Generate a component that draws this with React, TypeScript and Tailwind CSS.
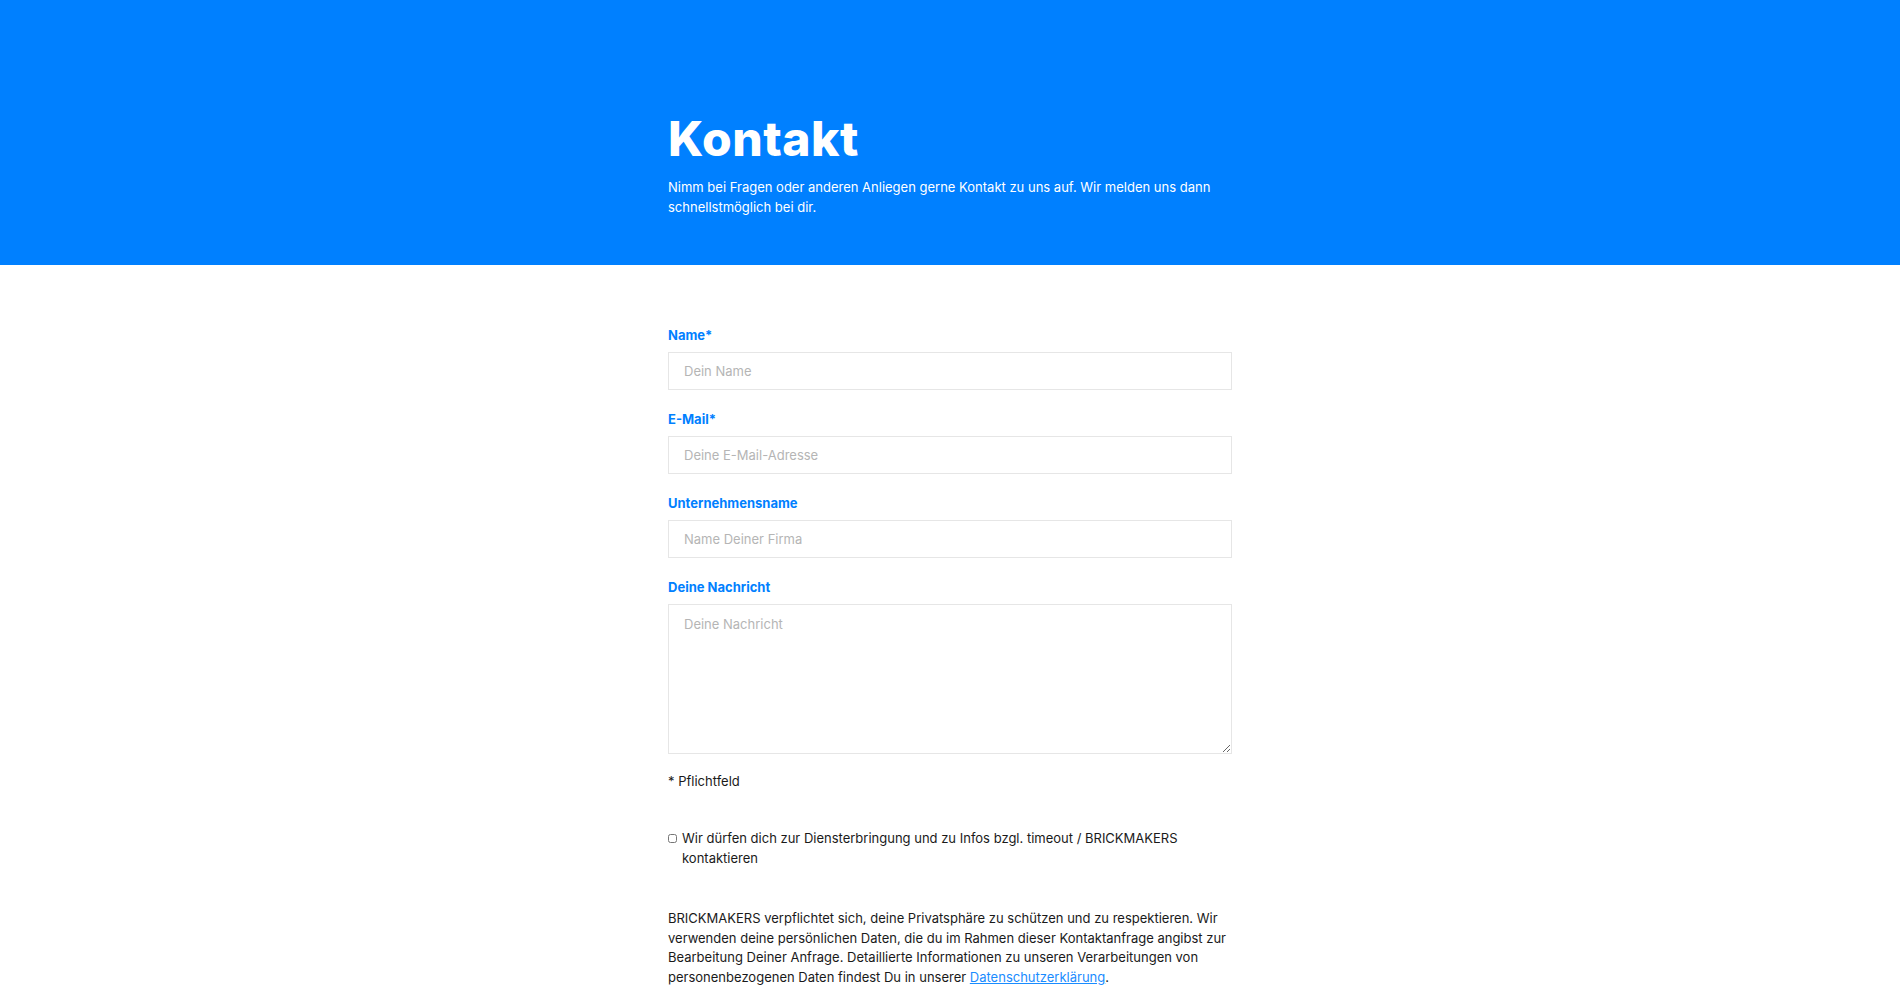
import { useState } from 'react'

// ── Form field ────────────────────────────────────────────────────────────────

interface FieldProps {
  label: string
  placeholder: string
  type?: string
  multiline?: boolean
}

function Field({ label, placeholder, type = 'text', multiline = false }: FieldProps) {
  return (
    <div className="flex flex-col">
      <label className="mb-2 text-[13px] leading-[18px] font-bold text-[#0080ff]">{label}</label>
      {multiline ? (
        <textarea
          placeholder={placeholder}
          className="h-[150px] w-full resize-y border border-[#e6e6e6] bg-white px-[15px] py-[10px] text-[13px] leading-[18px] text-[#222] outline-none placeholder:text-[#b5b5b5]"
        />
      ) : (
        <input
          type={type}
          placeholder={placeholder}
          className="h-[38px] w-full border border-[#e6e6e6] bg-white px-[15px] text-[13px] text-[#222] outline-none placeholder:text-[#b5b5b5]"
        />
      )}
    </div>
  )
}

// ── Page ──────────────────────────────────────────────────────────────────────

export default function App() {
  const [consent, setConsent] = useState(false)

  return (
    <div className="min-h-screen bg-white font-['Inter','Liberation_Sans',sans-serif] text-[#1a1a1a]">
      {/* Blue hero */}
      <header className="bg-[#0080ff] pt-[115px] pb-[48px]">
        <div className="mx-auto w-[564px]">
          <h1 className="text-[48px] leading-none font-extrabold tracking-[0.5px] text-white">Kontakt</h1>
          <p className="mt-[15px] text-[13px] leading-[19.5px] text-white">
            Nimm bei Fragen oder anderen Anliegen gerne Kontakt zu uns auf. Wir melden uns dann
            <br />
            schnellstmöglich bei dir.
          </p>
        </div>
      </header>

      {/* Contact form */}
      <main className="mx-auto w-[564px] pt-[61px] pb-[40px]">
        <form className="flex flex-col gap-[20px]" onSubmit={(e) => e.preventDefault()}>
          <Field label="Name*" placeholder="Dein Name" />
          <Field label="E-Mail*" placeholder="Deine E-Mail-Adresse" type="email" />
          <Field label="Unternehmensname" placeholder="Name Deiner Firma" />
          <Field label="Deine Nachricht" placeholder="Deine Nachricht" multiline />
        </form>

        <p className="mt-[18px] text-[13px] leading-[18px]">* Pflichtfeld</p>

        <div className="mt-[39px] flex items-start gap-[5px] text-[13px] leading-[19.5px]">
          <input
            id="consent"
            type="checkbox"
            checked={consent}
            onChange={(e) => setConsent(e.target.checked)}
            className="mt-[5px] h-[9px] w-[9px] shrink-0"
          />
          <label htmlFor="consent">
            Wir dürfen dich zur Diensterbringung und zu Infos bzgl. timeout / BRICKMAKERS
            <br />
            kontaktieren
          </label>
        </div>

        <p className="mt-[41px] text-[13px] leading-[19.5px]">
          BRICKMAKERS verpflichtet sich, deine Privatsphäre zu schützen und zu respektieren. Wir
          <br />
          verwenden deine persönlichen Daten, die du im Rahmen dieser Kontaktanfrage angibst zur
          <br />
          Bearbeitung Deiner Anfrage. Detaillierte Informationen zu unseren Verarbeitungen von
          <br />
          personenbezogenen Daten findest Du in unserer{' '}
          <a href="#" className="text-[#1a8cff] underline">
            Datenschutzerklärung
          </a>
          .
        </p>
      </main>
    </div>
  )
}
